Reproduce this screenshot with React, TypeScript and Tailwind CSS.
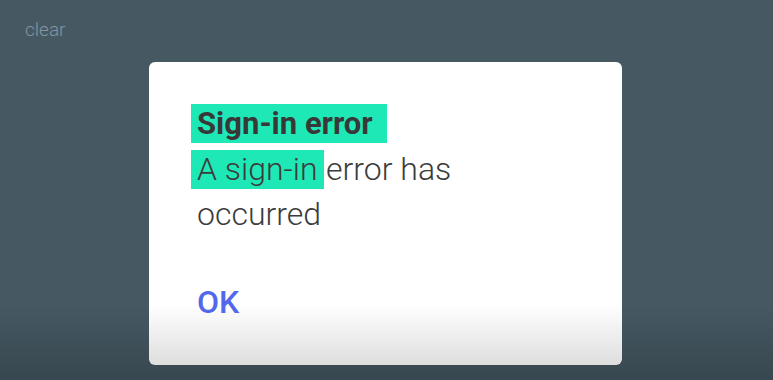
import React from "react";

export default function App() {
  return (
    <div
      className="w-[773px] h-[380px] overflow-hidden bg-gradient-to-b from-[#465962] via-[#465962] via-80% to-[#374750] flex flex-col"
      style={{ fontFamily: "Roboto, 'Noto Sans', sans-serif" }}
    >
      <div className="pl-[25px] pt-[18px] h-[62px] text-[19px] leading-[24px] font-light text-[#8394a0]">
        clear
      </div>
      <div className="pl-[149px]">
        <div className="w-[473px] h-[303px] rounded-[6px] bg-gradient-to-b from-white via-white via-80% to-[#dedede] pl-[42px] pt-[42px] flex flex-col">
          <div className="w-[196px] h-[39px] bg-[#1fe8b7] pl-[6px] text-[31px] leading-[39px] font-bold text-[#383838] whitespace-nowrap">
            Sign-in error
          </div>
          <div className="mt-[7px] flex h-[39px] text-[32px] leading-[39px] font-light text-[#3c3c3c] whitespace-nowrap">
            <span className="w-[133px] h-[39px] bg-[#1fe8b7] pl-[6px] overflow-hidden">A sign-in</span>
            <span className="pl-[2px]">error has</span>
          </div>
          <div className="mt-[6px] h-[39px] pl-[6px] text-[32px] leading-[39px] font-light text-[#3c3c3c]">
            occurred
          </div>
          <div className="mt-[49px] h-[39px] pl-[6px] text-[32px] leading-[39px] font-medium text-[#5268ec]">
            OK
          </div>
        </div>
      </div>
    </div>
  );
}
